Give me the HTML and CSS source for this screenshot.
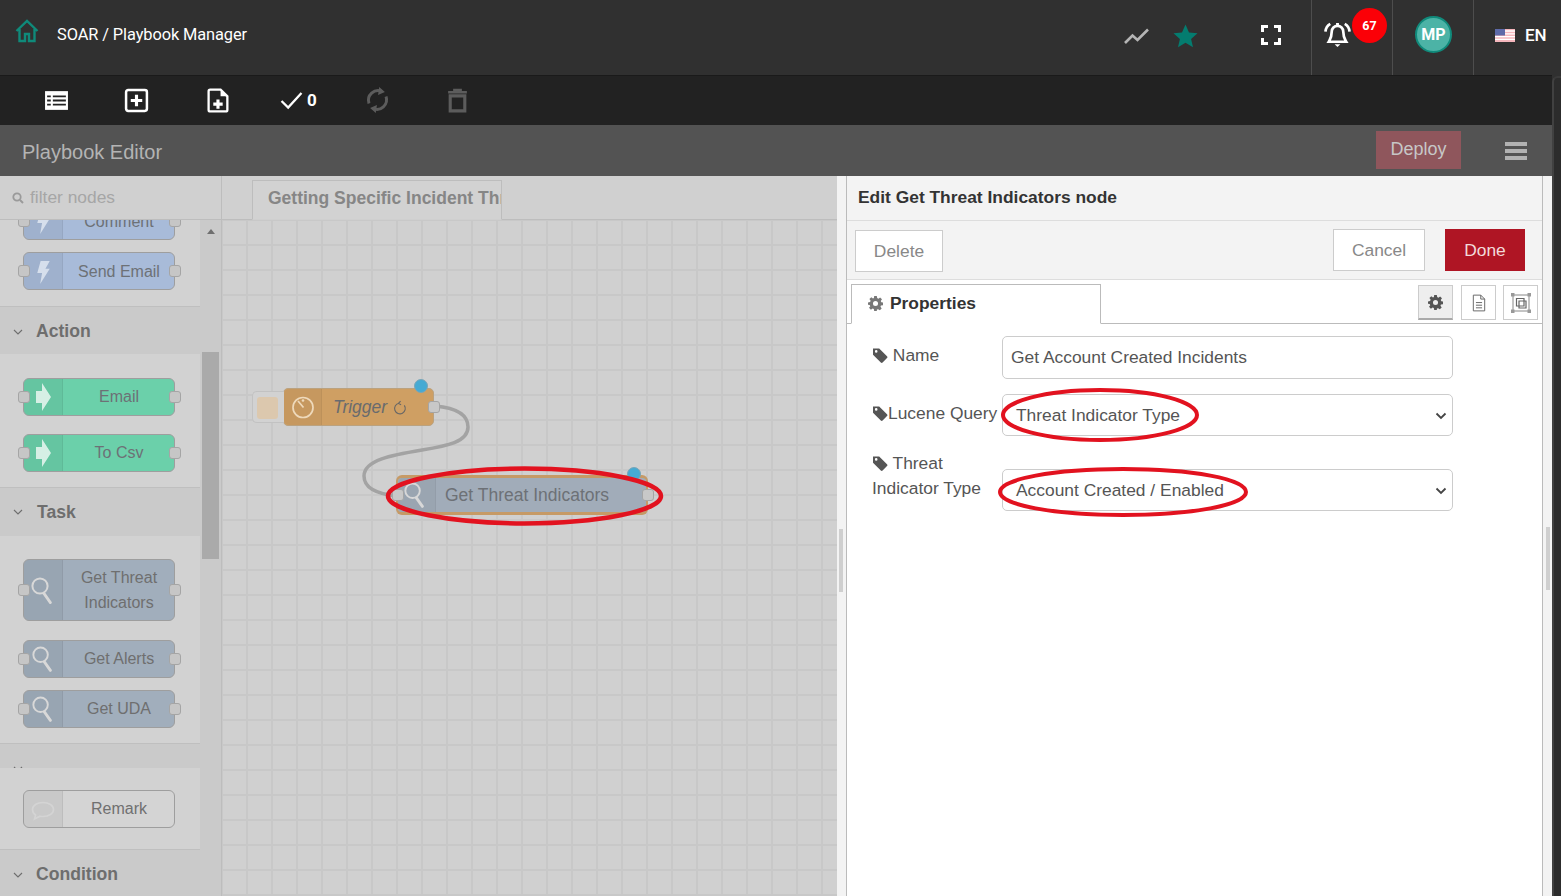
FILE: index.html
```html
<!DOCTYPE html>
<html lang="en">
<head>
<meta charset="utf-8">
<title>Playbook Manager</title>
<link rel="stylesheet" href="styles.css">
</head>
<body>
<svg class="defs" width="0" height="0" aria-hidden="true">
  <defs>
    <symbol id="tag" viewBox="0 0 16 16"><path d="M1 1.500h6.200L15 9.300a1.300 1.300 0 0 1 0 1.800l-4.400 4.400a1.300 1.300 0 0 1-1.800 0L1 7.700Zm3.200 1.600a1.300 1.300 0 1 0 0 2.600 1.300 1.300 0 0 0 0-2.600Z" fill-rule="evenodd"/></symbol>
    <symbol id="gear" viewBox="0 0 16 16"><path d="M6.600 0h2.800l.4 2.200 1.300.6L12.900 1.500l2 2-1.300 1.800.6 1.300L16 7v2.800l-2.200.4-.5 1.300 1.300 1.800-2 2-1.800-1.300-1.300.5L9.400 16H6.600l-.4-2.200-1.300-.5-1.800 1.300-2-2 1.300-1.800-.6-1.300L0 9.200V6.800l2.200-.4.600-1.300L1.500 3.300l2-2 1.800 1.300 1-.5ZM8 5.300a2.700 2.700 0 1 0 0 5.400 2.700 2.700 0 0 0 0-5.400Z" fill-rule="evenodd"/></symbol>
    <symbol id="search" viewBox="0 0 21 27"><circle cx="9" cy="9" r="7.600" fill="none" stroke="currentColor" stroke-width="2"/><path d="M13 16.500 19.300 25.500" fill="none" stroke="currentColor" stroke-width="3" stroke-linecap="round"/></symbol>
    <symbol id="bolt" viewBox="0 0 13 24"><path d="M3.500 0H13L8.500 8H13L3 24l2-11.500H0Z"/></symbol>
    <symbol id="arrow" viewBox="0 0 15 28"><path d="M0 8h6V0l9 14-9 14v-8H0Z"/></symbol>
    <symbol id="chev" viewBox="0 0 10 6"><path d="M1 1l4 4 4-4" fill="none" stroke="currentColor" stroke-width="1.100"/></symbol>
  </defs>
</svg>

<header class="topbar">
  <div class="brand">
    <svg class="home" viewBox="0 0 24 24"><path d="M1.500 12 12 2l10.500 10M4.500 10v12h5.500v-7h4v7h5.500V10" fill="none" stroke="#0f8a7a" stroke-width="2.400"/></svg>
    <span class="crumb">SOAR / Playbook Manager</span>
  </div>
  <div class="top-tools">
    <svg class="trend" viewBox="0 0 25 16"><path d="M1 15 8.500 7.500 13.500 12 24 1.500" fill="none" stroke="#b5b5b5" stroke-width="2.600"/></svg>
    <svg class="star" viewBox="0 0 24 24"><path d="M12 .5l3.500 8 8.500.8-6.400 5.600 1.900 8.400L12 18.800l-7.500 4.500 1.900-8.400L0 9.300l8.500-.8Z" fill="#047c6f"/></svg>
    <svg class="expand" viewBox="0 0 20 20"><path d="M1.500 7V1.500H7M13 1.500h5.500V7M18.500 13v5.500H13M7 18.500H1.500V13" fill="none" stroke="#fff" stroke-width="3"/></svg>
    <div class="cell bell-cell">
      <svg class="bell" viewBox="0 0 28 26"><path d="M14 3.500a6 6 0 0 1 6 6c0 6 1.500 8 3 10.500H5c1.500-2.500 3-4.500 3-10.500a6 6 0 0 1 6-6Z" fill="none" stroke="#fff" stroke-width="2.800"/><path d="M11 22.500h6l-3 3Z" fill="#fff"/><path d="M6.500 1.500Q2 4 1.500 9.500M21.500 1.500Q26 4 26.500 9.500M12.500 2h3" fill="none" stroke="#fff" stroke-width="2.800"/></svg>
      <span class="badge">67</span>
    </div>
    <div class="cell avatar-cell"><span class="avatar">MP</span></div>
    <div class="cell lang-cell">
      <svg class="flag" viewBox="0 0 20 13"><rect width="20" height="13" fill="#f5b7bd"/><path d="M0 2h20M0 4.800h20M0 7.600h20M0 10.400h20" stroke="#fff" stroke-width="1.300"/><rect width="10" height="6.500" fill="#5d6aa8"/></svg>
      <span class="lang">EN</span>
    </div>
  </div>
</header>

<div class="shell">
<div class="app">
  <nav class="toolbar">
    <svg class="tool" viewBox="0 0 24 24"><path d="M1 3h22v18H1Z" fill="#fff"/><path d="M3 8h3.500M8.500 8H21M3 12h3.500M8.500 12H21M3 16h3.500M8.500 16H21" stroke="#222" stroke-width="1.800"/></svg>
    <svg class="tool" viewBox="0 0 24 24"><rect x="2" y="2" width="20" height="20" rx="2" fill="none" stroke="#fff" stroke-width="2.400"/><path d="M12 6.500v11M6.500 12h11" stroke="#fff" stroke-width="3"/></svg>
    <svg class="tool file" viewBox="0 0 24 24"><path d="M4 1.500h10l6.500 6.500v13a1.500 1.500 0 0 1-1.500 1.500H4A1.500 1.500 0 0 1 2.500 21V3A1.500 1.500 0 0 1 4 1.500Z" fill="none" stroke="#fff" stroke-width="2.200"/><path d="M14 2v6h6Z" fill="#fff"/><path d="M11.500 11v9M7 15.500h9" stroke="#fff" stroke-width="3"/></svg>
    <div class="check"><svg class="tick" viewBox="0 0 24 20"><path d="M1.500 10.500 8.500 17.500 22.500 2" fill="none" stroke="#fff" stroke-width="2.400"/></svg><b>0</b></div>
    <svg class="tool sync" viewBox="1 0 22 24"><path d="M4.500 15A8.500 8.500 0 0 1 16 4.500M19.500 9A8.500 8.500 0 0 1 8 19.500" fill="none" stroke="#5c5c5c" stroke-width="2.600"/><path d="M13.500 .5l5 4.500-6 2.500ZM10.500 23.500l-5-4.500 6-2.500Z" fill="#5c5c5c"/></svg>
    <svg class="tool" viewBox="0 0 24 24"><path d="M3 4h18M9 4V2h6v2" fill="none" stroke="#5c5c5c" stroke-width="2.400"/><path d="M5 7.500h14V22H5Z" fill="none" stroke="#5c5c5c" stroke-width="3"/></svg>
  </nav>

  <div class="editor-bar">
    <span class="editor-title">Playbook Editor</span>
    <div class="editor-actions">
      <span class="deploy">Deploy</span>
      <span class="burger"><i></i><i></i><i></i></span>
    </div>
  </div>

  <div class="workspace">
    <aside class="palette">
      <div class="filter">
        <svg class="filter-ic" viewBox="0 0 12 12"><circle cx="5" cy="5" r="3.700" fill="none" stroke="#9a9a9a" stroke-width="1.800"/><path d="M8 8l3 3" stroke="#9a9a9a" stroke-width="2"/></svg>
        <span>filter nodes</span>
      </div>
      <div class="palette-scroll">
        <div class="palette-list">
          <div class="pal-group first">
            <div class="pnode blue clipped"><span class="ic"><svg class="bolt"><use href="#bolt"/></svg></span><span class="lbl">Comment</span><i class="port l"></i><i class="port r"></i></div>
            <div class="pnode blue"><span class="ic"><svg class="bolt"><use href="#bolt"/></svg></span><span class="lbl">Send Email</span><i class="port l"></i><i class="port r"></i></div>
          </div>
          <div class="pal-head h-action"><svg class="chev"><use href="#chev"/></svg><span>Action</span></div>
          <div class="pal-group action">
            <div class="pnode green"><span class="ic"><svg class="arrow"><use href="#arrow"/></svg></span><span class="lbl">Email</span><i class="port l"></i><i class="port r"></i></div>
            <div class="pnode green"><span class="ic"><svg class="arrow"><use href="#arrow"/></svg></span><span class="lbl">To Csv</span><i class="port l"></i><i class="port r"></i></div>
          </div>
          <div class="pal-head task"><svg class="chev"><use href="#chev"/></svg><span>Task</span></div>
          <div class="pal-group tasks">
            <div class="pnode slate tall"><span class="ic"><svg class="lens"><use href="#search"/></svg></span><span class="lbl">Get Threat<br>Indicators</span><i class="port l"></i><i class="port r"></i></div>
            <div class="pnode slate"><span class="ic"><svg class="lens"><use href="#search"/></svg></span><span class="lbl">Get Alerts</span><i class="port l"></i><i class="port r"></i></div>
            <div class="pnode slate"><span class="ic"><svg class="lens"><use href="#search"/></svg></span><span class="lbl">Get UDA</span><i class="port l"></i><i class="port r"></i></div>
          </div>
          <div class="pal-head stub"><svg class="chev"><use href="#chev"/></svg></div>
          <div class="pal-group remark">
            <div class="pnode plain"><span class="ic"><svg class="bubble" viewBox="0 0 24 20"><path d="M12 1.500c6 0 10.500 3 10.500 7s-4.500 7-10.500 7c-1 0-2 0-3-.3L3.500 18l1-4C2.500 12.700 1.500 10.700 1.500 8.500c0-4 4.500-7 10.500-7Z" fill="none" stroke="#d4d4d4" stroke-width="1.600"/></svg></span><span class="lbl">Remark</span></div>
          </div>
          <div class="pal-head h-cond"><svg class="chev"><use href="#chev"/></svg><span>Condition</span></div>
        </div>
        <div class="pal-scrollbar"><span class="up"></span><span class="thumb"></span></div>
      </div>
    </aside>

    <main class="canvas-area">
      <div class="tabs"><div class="tab">Getting Specific Incident Threat Indicators</div></div>
      <div class="canvas">
        <svg class="wire" viewBox="0 0 620 680"><path d="M213 186C235 188 246 195 246 207 246 222 225 226 200 230 170 235 142 240 142 256 142 268 155 274 175 276" fill="none" stroke="#a3a3a3" stroke-width="3.500"/></svg>
        <div class="fnode trigger">
          <span class="tbtn"><i></i></span>
          <span class="dot"></span>
          <span class="ic"><svg class="clock" viewBox="0 0 24 24"><circle cx="12" cy="12.500" r="10" fill="none" stroke="#eed9bb" stroke-width="1.700"/><path d="M7 6l5.500 6.500" stroke="#eed9bb" stroke-width="1.700"/><circle cx="12" cy="5.500" r="1.300" fill="#eed9bb"/></svg></span>
          <span class="lbl">Trigger <svg class="redo" viewBox="0 0 14 14"><path d="M8 1 6 3.200 8.500 4.500M6.500 3A5 5 0 1 0 11.500 5" fill="none" stroke="#666" stroke-width="1"/></svg></span>
          <i class="port r"></i>
        </div>
        <div class="fnode threat">
          <span class="dot"></span>
          <span class="ic"><svg class="lens"><use href="#search"/></svg></span>
          <span class="lbl">Get Threat Indicators</span>
          <i class="port l"></i><i class="port r"></i>
        </div>
        <svg class="ring ring-node" viewBox="0 0 280 60"><path d="M140 2.500C214 2.500 277 15 277 30S214 57.500 140 57.500 3 45 3 30 66 2.500 140 2.500Z" fill="none" stroke="#e2121f" stroke-width="4.500"/></svg>
      </div>
    </main>

    <section class="tray">
      <div class="split left"><i></i></div>
      <div class="tray-main">
        <div class="tray-head">Edit Get Threat Indicators node</div>
        <div class="tray-actions">
          <span class="btn del">Delete</span>
          <div class="btn-right"><span class="btn">Cancel</span><span class="btn done">Done</span></div>
        </div>
        <div class="tray-tabs">
          <div class="prop-tab"><svg class="gear"><use href="#gear"/></svg><span>Properties</span></div>
          <div class="mini-tabs">
            <span class="mini on"><svg class="gear"><use href="#gear"/></svg></span>
            <span class="mini"><svg class="mini-ic" viewBox="0 0 16 20"><path d="M1.500 1h8.500l4.500 4.500v13.500h-13Z M10 1v4.500h4.500 M4.500 9.500h7M4.500 12.500h7M4.500 15.500h7" fill="none" stroke="#666" stroke-width="1.100"/></svg></span>
            <span class="mini"><svg class="mini-ic wide" viewBox="0 0 20 20"><path d="M2 2h16v16H2Z" fill="none" stroke="#888" stroke-width="1"/><path d="M5.500 5.500h7.500v7.500H5.500ZM8 8h7v7H8Z" fill="none" stroke="#666" stroke-width="1.200"/><path d="M0 0h3.500v3.500H0ZM16.500 0H20v3.500h-3.500ZM0 16.500h3.500V20H0ZM16.500 16.500H20V20h-3.500Z" fill="#999"/></svg></span>
          </div>
        </div>
        <form class="form">
          <div class="row r-name">
            <label class="lab"><svg class="tag"><use href="#tag"/></svg> Name</label>
            <span class="input">Get Account Created Incidents</span>
          </div>
          <div class="row r-lucene">
            <label class="lab"><svg class="tag"><use href="#tag"/></svg>Lucene Query</label>
            <span class="input sel">Threat Indicator Type<svg class="sel-chev" viewBox="0 0 12 8"><path d="M1.500 1.500 6 6l4.500-4.500" fill="none" stroke="#444" stroke-width="1.800"/></svg>
              <svg class="ring ring-a" viewBox="0 0 198 54"><path d="M99 2C155 2 196 14 196 27S155 52 99 52 2 40 2 27 43 2 99 2Z" fill="none" stroke="#e2121f" stroke-width="4"/></svg>
            </span>
          </div>
          <div class="row r-threat">
            <label class="lab"><svg class="tag"><use href="#tag"/></svg> Threat<br>Indicator Type</label>
            <span class="input sel">Account Created / Enabled<svg class="sel-chev" viewBox="0 0 12 8"><path d="M1.500 1.500 6 6l4.500-4.500" fill="none" stroke="#444" stroke-width="1.800"/></svg>
              <svg class="ring ring-b" viewBox="0 0 250 50"><path d="M125 2C194 2 248 12 248 25S194 48 125 48 2 38 2 25 56 2 125 2Z" fill="none" stroke="#e2121f" stroke-width="4"/></svg>
            </span>
          </div>
        </form>
      </div>
      <div class="split right"><i></i></div>
    </section>
  </div>
</div>
<div class="rail"></div>
</div>
</body>
</html>
```
FILE: styles.css
```css
* { box-sizing: border-box; }
html, body { margin: 0; height: 100%; }
body { width: 1561px; height: 896px; overflow: hidden; background: #303030; font-family: Roboto, "Liberation Sans", sans-serif; display: flex; flex-direction: column; }
.defs { display: block; height: 0; width: 0; }

.topbar { height: 75px; flex: none; background: #303030; display: flex; justify-content: space-between; color: #fff; }
.brand { display: flex; align-items: flex-start; padding: 19px 0 0 15px; }
.home { width: 24px; height: 24px; }
.crumb { font-size: 16.400px; font-weight: 400; margin: 6px 0 0 18px; letter-spacing: -0.1px; }
.top-tools { display: flex; align-items: stretch; }
.trend { width: 25px; height: 16px; margin: 28px 0 0 0; }
.star { width: 25px; height: 24px; margin: 24px 0 0 24px; }
.expand { width: 20px; height: 20px; margin: 25px 30px 0 63px; }
.cell { border-left: 1px solid #4d4d4d; position: relative; height: 75px; }
.bell-cell { width: 81px; }
.bell { position: absolute; left: 12px; top: 22px; width: 27px; height: 26px; }
.badge { position: absolute; left: 40px; top: 8px; width: 35px; height: 35px; border-radius: 50%; background: #fb0007; color: #fff; font-size: 12.500px; font-weight: 700; display: flex; align-items: center; justify-content: center; }
.avatar-cell { width: 81px; }
.avatar { position: absolute; left: 22px; top: 16px; width: 37px; height: 37px; border-radius: 50%; background: #4cb3a6; border: 2px solid #108a7b; color: #fff; font-weight: 700; font-size: 16px; display: flex; align-items: center; justify-content: center; }
.lang-cell { width: 88px; display: flex; align-items: flex-start; padding: 25px 0 0 21px; }
.flag { width: 20px; height: 13px; margin-top: 4px; }
.lang { font-size: 17px; font-weight: 500; margin-left: 10px; letter-spacing: -0.2px; }

.shell { flex: 1; min-height: 0; display: flex; background: #303030; }
.rail { flex: 1; background: #2c2c2c; border-left: 2px solid #414141; border-top: 2px solid #3a3a3a; border-radius: 6px 0 0 0; margin-top: 1px; }
.app { width: 1552px; flex: none; display: flex; flex-direction: column; min-height: 0; }
.toolbar { height: 50px; flex: none; background: #222; display: flex; align-items: center; padding-left: 44px; box-shadow: inset 0 1px 0 #1a1a1a; }
.tool { width: 25px; height: 25px; margin-right: 55px; flex: none; }
.tool.file { margin-left: 2px; margin-right: 53px; }
.tool.sync { height: 28px; }
.check { width: 85px; margin-left: -4px; display: flex; align-items: center; color: #fff; font-size: 17px; }
.check b { margin-left: 4px; font-weight: 700; }
.tick { width: 23px; height: 19px; }

.editor-bar { height: 51px; flex: none; background: #535353; display: flex; justify-content: space-between; align-items: center; padding: 0 25px 0 22px; }
.editor-title { color: #b4b4b4; font-size: 20px; font-family: "Liberation Sans", Arial, sans-serif; padding-top: 3px; }
.editor-actions { display: flex; align-items: center; gap: 44px; }
.deploy { background: #8f565c; color: #c7c7c7; width: 85px; height: 38px; display: flex; align-items: center; justify-content: center; font-size: 18px; font-family: "Liberation Sans", Arial, sans-serif; margin-bottom: 1px; padding-bottom: 2px; }
.burger { display: flex; flex-direction: column; gap: 3px; width: 22px; }
.burger i { display: block; height: 4px; background: #b2b2b2; }

.workspace { flex: 1; min-height: 0; display: flex; background: #cfcfcf; font-family: "Liberation Sans", Arial, sans-serif; }
.palette { width: 222px; flex: none; border-right: 1px solid #bdbdbd; display: flex; flex-direction: column; background: #c9c9c9; min-height: 0; }
.filter { height: 44px; flex: none; display: flex; align-items: center; gap: 6px; padding: 0 0 0 12px; background: #d0d0d0; border-bottom: 1px solid #bdbdbd; color: #a6a6a6; font-size: 17.400px; }
.filter-ic { width: 12px; height: 12px; }
.palette-scroll { flex: 1; min-height: 0; display: flex; overflow: hidden; }
.palette-list { width: 200px; flex: none; }
.pal-scrollbar { flex: 1; background: #cacaca; display: flex; flex-direction: column; padding: 0 2px 0 2px; }
.up { width: 0; height: 0; border: 4px solid transparent; border-top: 0; border-bottom: 5px solid #6f6f6f; margin: 9px 0 0 5px; }
.thumb { width: 17px; height: 207px; background: #aaa; margin-top: 118px; }
.pal-group { background: #d2d2d2; border-bottom: 1px solid #bfbfbf; padding-left: 23px; }
.pal-group.first { height: 87px; overflow: hidden; padding-top: 12px; }
.pal-group.action { height: 134px; padding-top: 24px; }
.pal-group.tasks { height: 208px; padding-top: 23px; }
.pal-group.remark { height: 82px; padding-top: 22px; }
.pal-head { height: 46px; display: flex; align-items: center; padding-left: 13px; color: #6e6e6e; font-weight: 700; font-size: 17.600px; background: #cacaca; }
.pal-head.h-action { height: 47px; padding-top: 2px; }
.pal-head.h-cond { padding-top: 3px; }
.pal-head.task { height: 48px; }
.pal-head .chev { width: 10px; height: 6px; color: #6e6e6e; margin-right: 13px; }
.pal-head.task .chev { margin-right: 14px; }
.pal-head.stub { height: 24px; align-items: flex-end; overflow: hidden; }
.pal-head.stub .chev { margin-bottom: -4px; }

.pnode { position: relative; width: 152px; height: 38px; border-radius: 6px; border: 1px solid #9e9e9e; display: flex; align-items: center; font-size: 16px; color: #6d7176; }
.pnode + .pnode { margin-top: 12px; }
.pnode .ic { width: 39px; align-self: stretch; flex: none; background: rgba(0, 0, 0, .05); border-right: 1px solid rgba(0, 0, 0, .06); border-radius: 5px 0 0 5px; display: flex; align-items: center; justify-content: center; overflow: hidden; }
.pnode .lbl { flex: 1; text-align: center; padding: 0 0 2px 1px; line-height: 25px; }
.blue .lbl, .tall .lbl { padding-bottom: 0; }
.blue { background: #a8bbd9; }
.green { background: #6bd0aa; }
.green + .green { margin-top: 18px; }
.slate { background: #a1aebc; color: #6f6f6f; }
.slate.tall { height: 62px; margin-bottom: 19px; }
.pnode.slate.tall + .pnode { margin-top: 0; }
.plain { background: #d4d4d4; color: #707070; }
.pal-group.first .pnode.clipped { margin-top: -30px; }
.port { position: absolute; width: 12px; height: 12px; border-radius: 3px; background: #c6c6c6; border: 1px solid #a5a5a5; top: 50%; margin-top: -6px; }
.port.l { left: -6px; }
.port.r { right: -7px; }
.bolt { width: 13px; height: 23px; fill: #d6dfec; margin-top: 2px; }
.arrow { width: 15px; height: 28px; fill: #d6efe5; }
.lens { width: 20px; height: 26px; color: #d8d8d8; margin: 0 3px 0 0; }
.tall .lens { width: 21px; height: 27px; }
.bubble { width: 24px; height: 20px; margin-top: 3px; }

.canvas-area { flex: 1; min-width: 0; display: flex; flex-direction: column; position: relative; box-shadow: inset -5px 0 5px -4px rgba(0, 0, 0, .12); }
.tabs { height: 44px; flex: none; background: #d0d0d0; border-bottom: 1px solid #bdbdbd; padding: 4px 0 0 30px; }
.tab { width: 250px; height: 40px; border: 1px solid #bdbdbd; border-bottom-color: #cfcfcf; background: #d2d2d2; color: #868686; font-weight: 700; font-size: 17.500px; line-height: 35px; padding-left: 15px; white-space: nowrap; overflow: hidden; }
.canvas { flex: 1; position: relative; overflow: hidden; background-color: #d0d0d0; background-image: linear-gradient(#c8c8c8 2px, transparent 2px), linear-gradient(90deg, #c8c8c8 2px, transparent 2px); background-size: 25px 25px; background-position: -1px -1px; }
.wire { position: absolute; left: 0; top: 0; width: 620px; height: 680px; }
.fnode { position: absolute; height: 38px; border-radius: 5px; display: flex; align-items: center; font-size: 17.500px; color: #696b6e; }
.fnode .ic { width: 38px; align-self: stretch; flex: none; display: flex; align-items: center; justify-content: center; background: rgba(0, 0, 0, .04); border-right: 1px solid rgba(0, 0, 0, .05); border-radius: 5px 0 0 5px; }
.fnode .port { background: #c8c8c8; }
.trigger { left: 61px; top: 168px; width: 151px; background: #cf9f63; border: 1px solid #bba27f; }
.trigger .lbl { font-style: italic; padding-left: 11px; display: flex; align-items: center; gap: 5px; }
.clock { width: 24px; height: 24px; }
.redo { width: 15px; height: 15px; }
.tbtn { position: absolute; left: -32px; top: 2px; width: 32px; height: 32px; background: #d2d2d2; border: 1px solid #c2c2c2; border-right: 0; border-radius: 5px 0 0 5px; padding: 5px 4px; }
.tbtn i { display: block; width: 21px; height: 22px; background: #dcc8ae; border-radius: 3px; }
.dot { position: absolute; width: 14px; height: 14px; border-radius: 50%; background: #45aad3; border: 1px solid #7aa6b8; top: -10px; right: 5px; }
.threat { left: 175px; top: 256px; width: 250px; height: 38px; background: #a1acb9; border: 1px solid #c69a66; border-width: 2px 1px 2px 1px; box-shadow: 0 0 0 1px #c69a66; }
.threat .dot { right: 5px; top: -11px; }
.threat .ic .lens { margin: 0 6px 0 0; flex: none; }
.threat .lbl { flex: 1; padding-left: 9px; color: #6d7176; }
.threat .port.r { right: -8px; }
.ring { position: absolute; pointer-events: none; }
.ring-node { left: 163px; top: 246px; width: 279px; height: 60px; }

.tray { width: 715px; flex: none; display: flex; position: relative; }
.split { flex: none; background: #f3f3f3; display: flex; align-items: flex-start; justify-content: center; }
.split.left { width: 10px; border-right: 1px solid #bbb; padding: 353px 2px 0 0; }
.split.right { width: 10px; border-left: 1px solid #bbb; padding-top: 351px; }
.split i { display: block; width: 4px; height: 63px; background: #cfcfcf; }
.tray-main { flex: 1; min-width: 0; background: #fff; display: flex; flex-direction: column; }
.tray-head { height: 45px; flex: none; background: #f3f3f3; border-bottom: 1px solid #ddd; color: #333; font-weight: 700; font-size: 17.400px; line-height: 42px; padding-left: 11px; }
.tray-actions { height: 59px; flex: none; background: #f3f3f3; border-bottom: 1px solid #ddd; display: flex; justify-content: space-between; align-items: center; padding: 0 17px 0 8px; }
.btn { background: #fff; border: 1px solid #ccc; color: #888; font-size: 17.400px; display: inline-flex; align-items: center; justify-content: center; height: 42px; width: 92px; }
.del { width: 88px; margin-top: 2px; }
.btn-right { display: flex; gap: 20px; }
.done { width: 80px; background: #af1524; border-color: #af1524; color: #f2dada; }
.tray-tabs { height: 44px; flex: none; display: flex; justify-content: space-between; padding: 4px 4px 0 4px; border-bottom: 1px solid #bbb; position: relative; }
.prop-tab { width: 250px; height: 40px; background: #fff; border: 1px solid #bbb; border-bottom-color: #fff; display: flex; align-items: center; gap: 7px; padding: 0 0 2px 16px; font-weight: 700; font-size: 17.400px; color: #333; }
.prop-tab .gear { width: 15px; height: 15px; fill: #777; }
.mini-tabs { display: flex; gap: 7px; margin-top: 1px; }
.mini { width: 35px; height: 35px; background: #fff; border: 1px solid #ccc; display: flex; align-items: center; justify-content: center; }
.mini.on { background: #eee; border-bottom: 2px solid #aaa; margin-right: 1px; }
.mini .gear { width: 15px; height: 15px; fill: #555; }
.mini-ic { width: 14px; height: 18px; }
.mini-ic.wide { width: 20px; height: 20px; }
.form { flex: 1; padding: 12px 0 0 25px; position: relative; color: #555; font-size: 17.400px; }
.row { display: flex; align-items: flex-start; }
.lab { width: 130px; flex: none; color: #555; line-height: 25px; }
.tag { width: 16px; height: 16px; fill: #555; vertical-align: -2px; }
.input { position: relative; width: 451px; flex: none; background: #fff; border: 1px solid #ccc; border-radius: 5px; color: #555; display: flex; align-items: center; padding-left: 8px; white-space: nowrap; }
.r-name .input { height: 43px; }
.r-name .lab { padding-top: 7px; }
.r-lucene { margin-top: 15px; }
.r-lucene .input { height: 42px; padding-left: 13px; }
.r-lucene .lab { padding-top: 7px; }
.r-threat { margin-top: 17px; }
.r-threat .lab { margin-top: -2px; }
.r-threat .input { height: 42px; margin-top: 16px; padding-left: 13px; }
.sel-chev { position: absolute; right: 5px; top: 17px; width: 12px; height: 8px; }
.ring-a { left: -3px; top: -7px; width: 200px; height: 54px; }
.ring-b { left: -5px; top: -3px; width: 250px; height: 50px; }
```
